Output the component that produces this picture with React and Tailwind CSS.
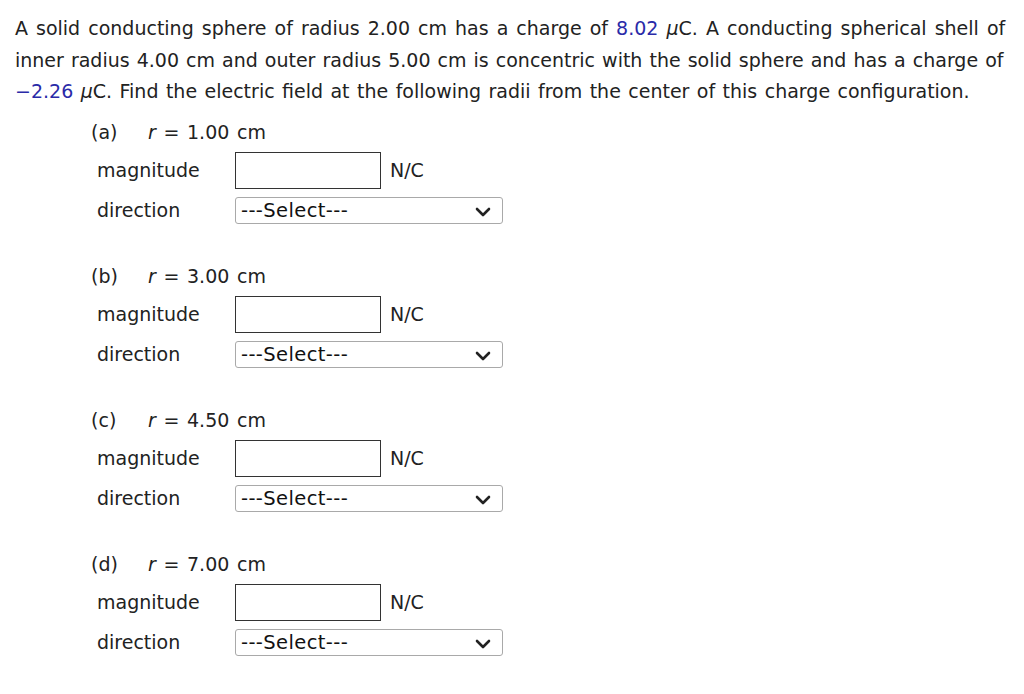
import React from 'react';

const parts = [
  { key: 'a', r: '1.00' },
  { key: 'b', r: '3.00' },
  { key: 'c', r: '4.50' },
  { key: 'd', r: '7.00' },
];

const Chevron = () => (
  <svg width="18" height="12" viewBox="0 0 18 12" className="absolute right-[10px] top-[8px]">
    <path d="M3 3 L9 9 L15 3" fill="none" stroke="#222" strokeWidth="2.6" strokeLinecap="round" strokeLinejoin="round" />
  </svg>
);

const Part = ({ label, r }) => (
  <div className="pl-[91px] mb-[38px]">
    <div className="flex items-center h-[28px]">
      <span className="w-[57px]">({label})</span>
      <span>
        <i>r</i> = {r} cm
      </span>
    </div>
    <div className="flex items-center h-[37px] mt-[6px] pl-[6px]">
      <span className="w-[138px]">magnitude</span>
      <input type="text" className="w-[146px] h-[37px] border border-[#333] bg-white outline-none" />
      <span className="ml-[9px]">N/C</span>
    </div>
    <div className="flex items-center h-[27px] mt-[8px] pl-[6px]">
      <span className="w-[138px]">direction</span>
      <div className="relative w-[268px] h-[27px] border border-[#a9a9a9] rounded-[3px] bg-white">
        <span className="absolute left-[5px] top-[-1px] text-[19.5px] leading-[27px] tracking-[0.4px] text-[#111] [word-spacing:0]">---Select---</span>
        <Chevron />
      </div>
    </div>
  </div>
);

export default function App() {
  return (
    <div className="min-h-screen bg-white text-[#222] font-['DejaVu_Sans',Verdana,sans-serif] text-[19px] [word-spacing:1.6px]">
      <p className="pt-[13px] pl-[15px] leading-[31.5px] whitespace-nowrap">
        <span className="[word-spacing:2px]">
          A solid conducting sphere of radius 2.00 cm has a charge of{' '}
          <span className="text-[#2a2aa8]">8.02</span> <i>μ</i>C. A conducting spherical shell of
        </span>
        <br />
        <span className="[word-spacing:1px]">
          inner radius 4.00 cm and outer radius 5.00 cm is concentric with the solid sphere and has a charge of
        </span>
        <br />
        <span className="[word-spacing:1.4px]">
          <span className="text-[#2a2aa8]">−2.26</span> <i>μ</i>C. Find the electric field at the following radii from the center of this charge configuration.
        </span>
      </p>
      <div className="mt-[10.5px]">
        {parts.map((p) => (
          <Part key={p.key} label={p.key} r={p.r} />
        ))}
      </div>
    </div>
  );
}
